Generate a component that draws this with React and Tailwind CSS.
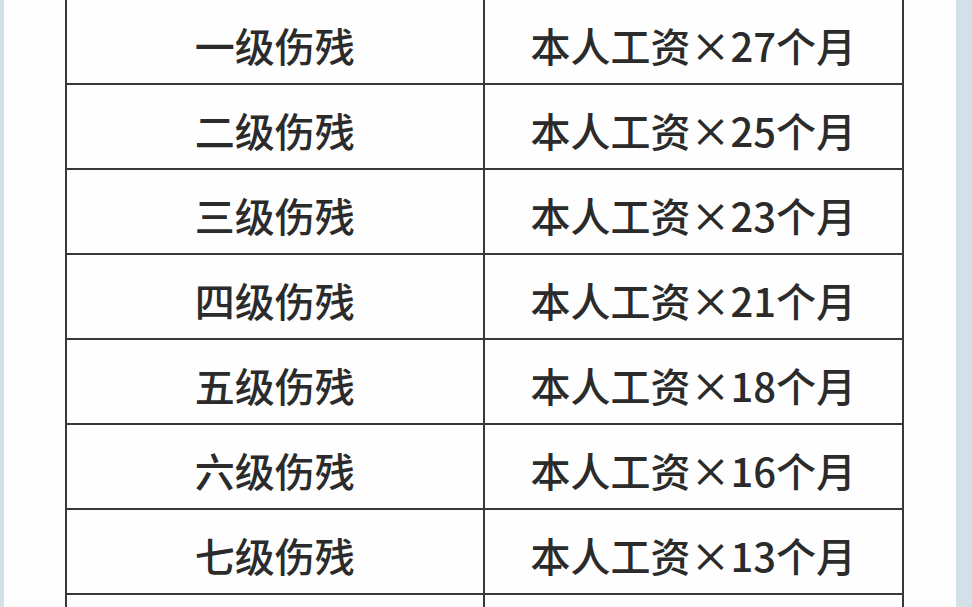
const rows = [
  ['一级伤残', '本人工资×27个月'],
  ['二级伤残', '本人工资×25个月'],
  ['三级伤残', '本人工资×23个月'],
  ['四级伤残', '本人工资×21个月'],
  ['五级伤残', '本人工资×18个月'],
  ['六级伤残', '本人工资×16个月'],
  ['七级伤残', '本人工资×13个月'],
  ['', ''],
]

export default function App() {
  return (
    <div
      className="flex w-[972px] h-[607px] overflow-hidden bg-[#fdfefd]"
      style={{ fontFamily: '"Noto Sans CJK SC", "Noto Sans", sans-serif' }}
    >
      <div className="w-[4px] shrink-0 bg-[#d3e0e8]" />
      <div className="flex-1 pl-[61px] pr-[52px]">
        <div className="-mt-[2px] border-x-2 border-[#383838]">
          {rows.map(([level, pay], i) => (
            <div key={i} className="grid grid-cols-2 h-[85px] border-t-2 border-[#383838]">
              <div className="flex items-center justify-center pt-[6px] text-[40px] font-medium text-[#2b2b2b] border-r-2 border-[#383838]">
                {level}
              </div>
              <div className="flex items-center justify-center pt-[6px] text-[40px] font-medium text-[#2b2b2b]">
                {pay}
              </div>
            </div>
          ))}
        </div>
      </div>
      <div className="w-[16px] shrink-0 bg-[#d3e0e8]" />
    </div>
  )
}
